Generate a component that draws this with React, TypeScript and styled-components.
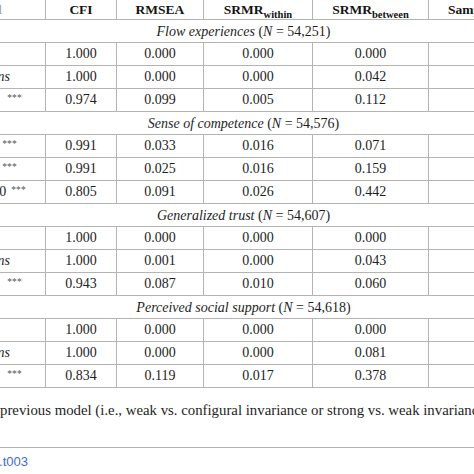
import React from "react";
import styled, { createGlobalStyle } from "styled-components";

const Global = createGlobalStyle`
  html, body {
    margin: 0;
    padding: 0;
    background: #ffffff;
    overflow: hidden;
    width: 474px;
    height: 474px;
  }
  #root {
    width: 474px;
    height: 474px;
    overflow: hidden;
  }
`;

const LINE = "#b4b4b4";
const COLS = "102px 71px 87px 109px 116px 114px";

const Page = styled.div`
  width: 474px;
  height: 474px;
  overflow: hidden;
  font-family: "Liberation Serif", "Times New Roman", serif;
  color: #1e1e1e;
`;

const Table = styled.div`
  margin-left: -56px;
  width: 599px;
  display: flex;
  flex-direction: column;
`;

const Row = styled.div<{ $h: number }>`
  display: grid;
  grid-template-columns: ${COLS};
  height: ${(p) => p.$h}px;
  box-sizing: border-box;
  border-bottom: 1px solid ${LINE};
`;

const Cell = styled.div`
  box-sizing: border-box;
  border-right: 1px solid ${LINE};
  display: flex;
  align-items: center;
  justify-content: center;
  font-size: 14px;
  white-space: nowrap;
  overflow: hidden;
  &:last-child {
    border-right: none;
  }
`;

const HeadCell = styled(Cell)<{ $start?: boolean }>`
  font-weight: bold;
  font-size: 13.5px;
  color: #141414;
  justify-content: ${(p) => (p.$start ? "flex-start" : "center")};
  padding-left: ${(p) => (p.$start ? "19px" : "0")};
`;

const Sub = styled.sub`
  font-size: 10.5px;
  vertical-align: -4px;
  line-height: 0;
`;

const LabelCell = styled(Cell)<{ $trail: number }>`
  justify-content: flex-end;
  padding-right: ${(p) => p.$trail}px;
`;

const HeadLabel = styled(LabelCell)`
  color: #9a9a9a;
  font-size: 13px;
`;

const LabelText = styled.span`
  white-space: nowrap;
`;

const Mark = styled.sup<{ $gap: number }>`
  font-size: 9.5px;
  line-height: 0;
  vertical-align: 3px;
  color: #555;
  letter-spacing: 0.2px;
  margin-left: ${(p) => p.$gap}px;
`;

const Ns = styled.i`
  font-style: italic;
  margin-left: 8px;
`;

const SectionRow = styled.div`
  height: 23px;
  box-sizing: border-box;
  border-bottom: 1px solid ${LINE};
  display: flex;
  align-items: center;
  justify-content: center;
  font-size: 14px;
  white-space: nowrap;
  padding-top: 1px;
`;

const It = styled.i`
  font-style: italic;
`;

const Footnote = styled.div`
  margin-top: 12px;
  height: 48px;
  box-sizing: border-box;
  border-bottom: 1px solid ${LINE};
  font-size: 14.8px;
  line-height: 20px;
  white-space: nowrap;
  overflow: hidden;
  color: #1e1e1e;
`;

const LinkRow = styled.div`
  width: 28px;
  height: 25px;
  display: flex;
  justify-content: flex-end;
  align-items: center;
  overflow: visible;
  padding-top: 1px;
`;

const Link = styled.a`
  font-family: "Liberation Sans", Arial, sans-serif;
  font-size: 13px;
  color: #3f6ad8;
  text-decoration: none;
  white-space: nowrap;
`;

type DataRow = {
  label: React.ReactNode;
  trail: number;
  cfi: string;
  rmsea: string;
  within: string;
  between: string;
};

type Section = { title: string; n: string; rows: DataRow[] };

const stars = (gap: number) => <Mark $gap={gap}>***</Mark>;

const sections: Section[] = [
  {
    title: "Flow experiences",
    n: "54,251",
    rows: [
      { label: <>Configural invariance</>, trail: 50, cfi: "1.000", rmsea: "0.000", within: "0.000", between: "0.000" },
      { label: <>Weak invariance<Ns>ns</Ns></>, trail: 35, cfi: "1.000", rmsea: "0.000", within: "0.000", between: "0.042" },
      { label: <>Strong invariance{stars(14)}</>, trail: 23, cfi: "0.974", rmsea: "0.099", within: "0.005", between: "0.112" },
    ],
  },
  {
    title: "Sense of competence",
    n: "54,576",
    rows: [
      { label: <>Configural invariance{stars(6)}</>, trail: 28, cfi: "0.991", rmsea: "0.033", within: "0.016", between: "0.071" },
      { label: <>Weak invariance{stars(6)}</>, trail: 28, cfi: "0.991", rmsea: "0.025", within: "0.016", between: "0.159" },
      { label: <>Strong invariance 10{stars(5)}</>, trail: 19, cfi: "0.805", rmsea: "0.091", within: "0.026", between: "0.442" },
    ],
  },
  {
    title: "Generalized trust",
    n: "54,607",
    rows: [
      { label: <>Configural invariance</>, trail: 50, cfi: "1.000", rmsea: "0.000", within: "0.000", between: "0.000" },
      { label: <>Weak invariance<Ns>ns</Ns></>, trail: 35, cfi: "1.000", rmsea: "0.001", within: "0.000", between: "0.043" },
      { label: <>Strong invariance{stars(14)}</>, trail: 23, cfi: "0.943", rmsea: "0.087", within: "0.010", between: "0.060" },
    ],
  },
  {
    title: "Perceived social support",
    n: "54,618",
    rows: [
      { label: <>Configural invariance</>, trail: 50, cfi: "1.000", rmsea: "0.000", within: "0.000", between: "0.000" },
      { label: <>Weak invariance<Ns>ns</Ns></>, trail: 35, cfi: "1.000", rmsea: "0.000", within: "0.000", between: "0.081" },
      { label: <>Strong invariance{stars(14)}</>, trail: 23, cfi: "0.834", rmsea: "0.119", within: "0.017", between: "0.378" },
    ],
  },
];

export default function App() {
  return (
    <Page>
      <Global />
      <Table>
        <Row $h={20}>
          <HeadLabel $trail={43}>
            <LabelText>Model</LabelText>
          </HeadLabel>
          <HeadCell>CFI</HeadCell>
          <HeadCell>RMSEA</HeadCell>
          <HeadCell>
            <LabelText>
              SRMR<Sub>within</Sub>
            </LabelText>
          </HeadCell>
          <HeadCell>
            <LabelText>
              SRMR<Sub>between</Sub>
            </LabelText>
          </HeadCell>
          <HeadCell $start>Sample size</HeadCell>
        </Row>
        {sections.map((s) => (
          <React.Fragment key={s.title}>
            <SectionRow>
              <LabelText>
                <It>{s.title}</It> (<It>N</It> = {s.n})
              </LabelText>
            </SectionRow>
            {s.rows.map((r, i) => (
              <Row $h={23} key={i}>
                <LabelCell $trail={r.trail}>
                  <LabelText>{r.label}</LabelText>
                </LabelCell>
                <Cell>{r.cfi}</Cell>
                <Cell>{r.rmsea}</Cell>
                <Cell>{r.within}</Cell>
                <Cell>{r.between}</Cell>
                <Cell />
              </Row>
            ))}
          </React.Fragment>
        ))}
      </Table>
      <Footnote>
        previous model (i.e., weak vs. configural invariance or strong vs. weak invariance).
      </Footnote>
      <LinkRow>
        <Link href="#">journal.pone.0000000.t003</Link>
      </LinkRow>
    </Page>
  );
}
